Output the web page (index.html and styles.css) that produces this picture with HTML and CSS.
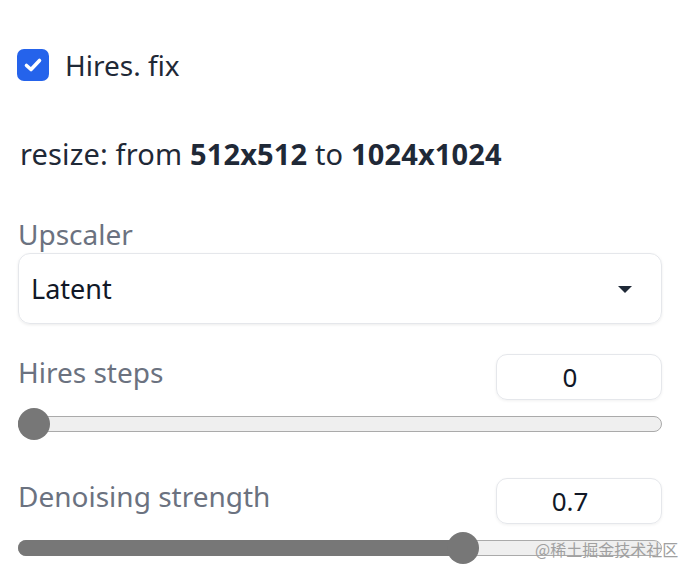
FILE: index.html
```html
<!DOCTYPE html>
<html>
<head>
<meta charset="utf-8">
<link rel="stylesheet" href="styles.css">
</head>
<body>
<div class="panel">
  <label class="check-row">
    <span class="checkbox">
      <svg width="22" height="22" viewBox="0 0 22 22"><path d="M4.5 11.5 L9 15.5 L17.5 6.5" fill="none" stroke="#fff" stroke-width="3.6" stroke-linecap="round" stroke-linejoin="round"/></svg>
    </span>
    <span class="check-text">Hires. fix</span>
  </label>

  <div class="resize">resize: from <b>512x512</b> to <b>1024x1024</b></div>

  <div class="label up-label">Upscaler</div>
  <div class="select">
    <span>Latent</span>
    <svg class="caret" width="14" height="8" viewBox="0 0 14 8"><path d="M0 0 H14 L7 7 Z" fill="#1f2937"/></svg>
  </div>

  <div class="slider-head first">
    <span class="label">Hires steps</span>
    <div class="num">0</div>
  </div>
  <div class="track">
    <div class="fill" style="width:15px"></div>
    <div class="thumb" style="left:-1px"></div>
  </div>

  <div class="slider-head second">
    <span class="label">Denoising strength</span>
    <div class="num">0.7</div>
  </div>
  <div class="track">
    <div class="fill" style="width:444px"></div>
    <div class="thumb" style="left:428px"></div>
  </div>
</div>
<div class="watermark">@稀土掘金技术社区</div>
</body>
</html>
```

FILE: styles.css
```css
html, body {
  margin: 0;
  padding: 0;
  background: #fff;
}
body {
  font-family: "Noto Sans", "Open Sans", "Noto Sans CJK SC", sans-serif;
  color: #1f2937;
  width: 695px;
  height: 575px;
  overflow: hidden;
  position: relative;
}
.panel {
  padding: 49px 33px 0 18px;
  display: flex;
  flex-direction: column;
}
.check-row {
  display: flex;
  align-items: center;
  height: 32px;
  margin-left: -1px;
}
.checkbox {
  width: 32px;
  height: 32px;
  border-radius: 7px;
  background: #2563eb;
  display: flex;
  align-items: center;
  justify-content: center;
  flex: none;
}
.check-text {
  margin-left: 16px;
  font-size: 28px;
  line-height: 36px;
  color: #1f2937;
}
.resize {
  margin-top: 55px;
  margin-left: 2px;
  font-size: 29px;
  line-height: 36px;
  letter-spacing: 0.15px;
  color: #1f2937;
}
.resize b {
  font-weight: 700;
  color: #1f2937;
}
.label {
  font-size: 28px;
  line-height: 36px;
  color: #6b7280;
}
.up-label {
  margin-top: 44px;
}
.select {
  margin-top: 1px;
  height: 69px;
  border: 1px solid #e5e7eb;
  border-radius: 12px;
  box-shadow: 0 1px 3px rgba(0,0,0,0.08);
  display: flex;
  align-items: center;
  justify-content: space-between;
  padding: 0 29px 0 12px;
  font-size: 27px;
  color: #111827;
}
.caret {
  margin-top: 2px;
}
.slider-head {
  display: flex;
  justify-content: space-between;
  align-items: flex-start;
  height: 46px;
}
.slider-head.first {
  margin-top: 30px;
}
.slider-head.second {
  margin-top: 46px;
}
.num {
  box-sizing: border-box;
  width: 166px;
  height: 46px;
  padding-right: 18px;
  border: 1px solid #e5e7eb;
  border-radius: 11px;
  box-shadow: 0 1px 3px rgba(0,0,0,0.06);
  display: flex;
  align-items: center;
  justify-content: center;
  font-size: 26px;
  color: #111827;
}
.track {
  margin-top: 16px;
  height: 14px;
  border: 1px solid #aaa;
  border-radius: 8px;
  background: #efefef;
  position: relative;
}
.fill {
  position: absolute;
  left: -1px;
  top: -1px;
  height: 16px;
  border-radius: 8px;
  background: #777;
}
.thumb {
  position: absolute;
  top: -9px;
  width: 32px;
  height: 32px;
  border-radius: 50%;
  background: #777;
}
.watermark {
  position: absolute;
  left: 535px;
  top: 537px;
  font-size: 16px;
  color: #a0a0a0;
  font-family: "Noto Sans CJK SC", sans-serif;
}
```
